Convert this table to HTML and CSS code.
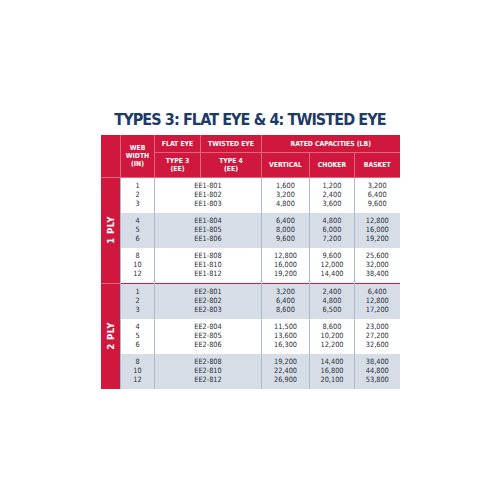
FILE: index.html
```html
<!DOCTYPE html>
<html lang="en">
<head>
  <meta charset="UTF-8">
  <title>Types 3 &amp; 4 Sling Capacities</title>
  <link rel="stylesheet" href="styles.css">
</head>
<body>

<div class="sheet">
  <h1 class="title">TYPES 3: FLAT EYE &amp; 4: TWISTED EYE</h1>

  <table class="chart">
    <colgroup>
      <col class="c-ply">
      <col class="c-web">
      <col class="c-flat">
      <col class="c-twist">
      <col class="c-vert">
      <col class="c-choke">
      <col class="c-bask">
    </colgroup>
    <thead>
      <tr class="head-top">
        <th rowspan="2"></th>
        <th rowspan="2">WEB<br>WIDTH<br>(IN)</th>
        <th>FLAT EYE</th>
        <th>TWISTED EYE</th>
        <th colspan="3">RATED CAPACITIES (LB)</th>
      </tr>
      <tr class="head-sub">
        <th>TYPE 3<br>(EE)</th>
        <th>TYPE 4<br>(EE)</th>
        <th>VERTICAL</th>
        <th>CHOKER</th>
        <th>BASKET</th>
      </tr>
    </thead>
    <tbody>
      <tr>
        <th class="ply" rowspan="3"><span>1 PLY</span></th>
        <td>1<br>2<br>3</td>
        <td colspan="2">EE1-801<br>EE1-802<br>EE1-803</td>
        <td>1,600<br>3,200<br>4,800</td>
        <td>1,200<br>2,400<br>3,600</td>
        <td>3,200<br>6,400<br>9,600</td>
      </tr>
      <tr class="shade">
        <td>4<br>5<br>6</td>
        <td colspan="2">EE1-804<br>EE1-805<br>EE1-806</td>
        <td>6,400<br>8,000<br>9,600</td>
        <td>4,800<br>6,000<br>7,200</td>
        <td>12,800<br>16,000<br>19,200</td>
      </tr>
      <tr>
        <td>8<br>10<br>12</td>
        <td colspan="2">EE1-808<br>EE1-810<br>EE1-812</td>
        <td>12,800<br>16,000<br>19,200</td>
        <td>9,600<br>12,000<br>14,400</td>
        <td>25,600<br>32,000<br>38,400</td>
      </tr>
      <tr class="shade split">
        <th class="ply" rowspan="3"><span>2 PLY</span></th>
        <td>1<br>2<br>3</td>
        <td colspan="2">EE2-801<br>EE2-802<br>EE2-803</td>
        <td>3,200<br>6,400<br>8,600</td>
        <td>2,400<br>4,800<br>6,500</td>
        <td>6,400<br>12,800<br>17,200</td>
      </tr>
      <tr>
        <td>4<br>5<br>6</td>
        <td colspan="2">EE2-804<br>EE2-805<br>EE2-806</td>
        <td>11,500<br>13,600<br>16,300</td>
        <td>8,600<br>10,200<br>12,200</td>
        <td>23,000<br>27,200<br>32,600</td>
      </tr>
      <tr class="shade">
        <td>8<br>10<br>12</td>
        <td colspan="2">EE2-808<br>EE2-810<br>EE2-812</td>
        <td>19,200<br>22,400<br>26,900</td>
        <td>14,400<br>16,800<br>20,100</td>
        <td>38,400<br>44,800<br>53,800</td>
      </tr>
    </tbody>
  </table>
</div>

</body>
</html>
```

FILE: styles.css
```css
body {
  margin: 0;
  background: #fff;
  font-family: "DejaVu Sans", sans-serif;
}

.sheet {
  width: 299px;
  margin: 0 auto;
  padding-top: 110px;
}

.title {
  margin: 0 0 5px -20px;
  width: 339px;
  text-align: center;
  font-family: "DejaVu Sans", sans-serif;
  font-stretch: condensed;
  font-weight: bold;
  font-size: 16px;
  line-height: 20px;
  letter-spacing: -0.9px;
  color: #1c3a6a;
}

.chart {
  width: 299px;
  border-collapse: collapse;
  table-layout: fixed;
  font-family: "DejaVu Sans", sans-serif;
  font-stretch: condensed;
  font-size: 7.3px;
  color: #2a2e38;
}

.c-ply { width: 20px; }
.c-web { width: 34px; }
.c-flat { width: 46px; }
.c-twist { width: 61px; }
.c-vert { width: 48px; }
.c-choke { width: 45px; }
.c-bask { width: 45px; }

thead th {
  background: #d0183e;
  color: #fff;
  font-weight: bold;
  font-size: 6.8px;
  line-height: 8px;
  padding: 0;
  border: 1px solid #e0657d;
  text-align: center;
}

thead tr:first-child th {
  border-top: none;
}

thead th:first-child {
  border-left: none;
}

thead th:last-child {
  border-right: none;
}

.head-top th {
  height: 17px;
}

.head-sub th {
  height: 24px;
}

tbody td {
  padding: 0;
  height: 35px;
  line-height: 8.7px;
  text-align: center;
  border-left: 1px solid #a9bccd;
}

tbody tr.shade td {
  background: #d6dde7;
}

tbody tr.split td {
  border-top: 1px solid #cc1f3f;
}

.ply {
  background: #d0183e;
  color: #fff;
  padding: 0;
  border-top: 1px solid #e0657d;
}

.ply span {
  display: inline-block;
  writing-mode: vertical-rl;
  transform: rotate(180deg);
  font-size: 9.5px;
  font-weight: bold;
  letter-spacing: 0.5px;
}
```
